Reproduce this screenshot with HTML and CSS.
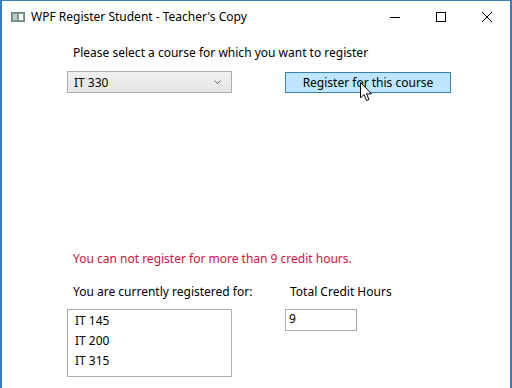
FILE: index.html
```html
<!DOCTYPE html>
<html lang="en">
<head>
    <meta charset="UTF-8">
    <title>WPF Register Student - Teacher's Copy</title>
    <link rel="stylesheet" href="styles.css">
</head>
<body>
    <div class="window">
        <div class="titlebar">
            <svg class="app-icon" width="14" height="10" viewBox="0 0 14 10">
                <rect x="0.5" y="0.5" width="13" height="9" fill="#7f9a94" stroke="#6c8680"/>
                <rect x="2" y="2" width="4" height="6" fill="#b9c9c5"/>
                <rect x="8" y="2" width="4" height="6" fill="#ffffff"/>
            </svg>
            <span class="title">WPF Register Student - Teacher's Copy</span>
            <div class="caption-buttons">
                <svg class="cap" width="46" height="31" viewBox="0 0 46 31">
                    <line x1="18" y1="16.5" x2="28" y2="16.5" stroke="#000" stroke-width="1"/>
                </svg>
                <svg class="cap" width="46" height="31" viewBox="0 0 46 31">
                    <rect x="18.5" y="11.5" width="9" height="9" fill="none" stroke="#000" stroke-width="1"/>
                </svg>
                <svg class="cap" width="46" height="31" viewBox="0 0 46 31">
                    <path d="M18 11 L28 21 M28 11 L18 21" stroke="#000" stroke-width="1"/>
                </svg>
            </div>
        </div>
        <div class="content">
            <p class="label prompt">Please select a course for which you want to register</p>
            <div class="select-row">
                <div class="combo">
                    <span>IT 330</span>
                    <svg class="combo-arrow" width="7" height="4" viewBox="0 0 7 4">
                        <path d="M0.5 0.5 L3.5 3.5 L6.5 0.5" fill="none" stroke="#606060" stroke-width="1"/>
                    </svg>
                </div>
                <button class="register-btn">Register for this course</button>
            </div>
            <p class="label error">You can not register for more than 9 credit hours.</p>
            <div class="bottom-row">
                <div class="col">
                    <p class="label">You are currently registered for:</p>
                    <ul class="listbox">
                        <li>IT 145</li>
                        <li>IT 200</li>
                        <li>IT 315</li>
                    </ul>
                </div>
                <div class="col col-hours">
                    <p class="label">Total Credit Hours</p>
                    <div class="textbox">9</div>
                </div>
            </div>
            <svg class="cursor" width="13" height="20" viewBox="0 0 13 20">
                <path d="M0.5 0.5 L0.5 16 L4 12.5 L6.5 18.5 L9 17.5 L6.5 11.8 L11.5 11.8 Z" fill="#fff" stroke="#000" stroke-width="1" stroke-linejoin="miter"/>
            </svg>
        </div>
    </div>
</body>
</html>
```

FILE: styles.css
```css
body {
    margin: 0;
    padding: 0;
    font-family: "Noto Sans", Arial, sans-serif;
    font-size: 12px;
    color: #000;
    background-color: #fff;
}

.window {
    width: 512px;
    height: 388px;
    box-sizing: border-box;
    border: 1px solid #3b7cbd;
    border-left-width: 2px;
    border-right-width: 2px;
    border-bottom: none;
    display: flex;
    flex-direction: column;
    overflow: hidden;
}

.titlebar {
    height: 31px;
    display: flex;
    align-items: center;
    background-color: #fff;
}

.app-icon {
    margin-left: 9px;
    margin-top: 1px;
}

.title {
    margin-left: 6px;
    font-size: 12px;
    margin-top: -1px;
}

.caption-buttons {
    margin-left: auto;
    display: flex;
    margin-top: -1px;
}

.cap {
    display: block;
}

.content {
    position: relative;
    flex: 1;
    padding-left: 65px;
}

.label {
    margin: 0;
    line-height: 16px;
    padding-left: 6px;
}

.prompt {
    margin-top: 13px;
}

.select-row {
    display: flex;
    align-items: flex-start;
    margin-top: 10px;
}

.combo {
    width: 157px;
    height: 20px;
    border: 1px solid #acacac;
    background: linear-gradient(#f0f0f0, #e5e5e5);
    display: flex;
    align-items: center;
    padding-left: 6px;
}

.combo span {
    flex: 1;
}

.combo-arrow {
    margin-right: 10px;
}

.register-btn {
    margin-left: 53px;
    margin-top: 1px;
    width: 166px;
    height: 21px;
    border: 1px solid #3c7fb1;
    background-color: #bee6fd;
    font-family: inherit;
    font-size: 12px;
    padding: 0;
    color: #000;
}

.error {
    margin-top: 158px;
    color: #d0113a;
}

.bottom-row {
    display: flex;
    margin-top: 17px;
}

.col {
    width: 218px;
}

.col-hours {
    width: auto;
}

.col-hours .label {
    padding-left: 5px;
}

.listbox {
    list-style: none;
    margin: 9px 0 0 0;
    padding: 1px 0 0 7px;
    width: 156px;
    height: 65px;
    border: 1px solid #abadb3;
}

.listbox li {
    line-height: 20px;
}

.textbox {
    margin: 9px 0 0 0;
    width: 72px;
    height: 22px;
    border: 1px solid #abadb3;
    padding-left: 3px;
    line-height: 18px;
    box-sizing: border-box;
}

.cursor {
    position: absolute;
    left: 358px;
    top: 50px;
}
```
